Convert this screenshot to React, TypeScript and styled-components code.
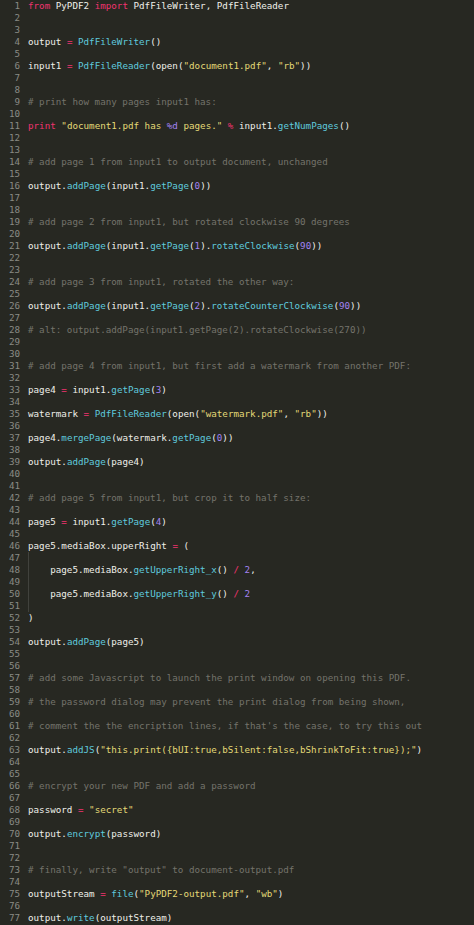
import React, { FC, Fragment } from 'react'
import styled, { createGlobalStyle } from 'styled-components'

type Kind = 'plain' | 'kw' | 'fn' | 'str' | 'num' | 'com'

const SOURCE = `from PyPDF2 import PdfFileWriter, PdfFileReader


output = PdfFileWriter()

input1 = PdfFileReader(open("document1.pdf", "rb"))


# print how many pages input1 has:

print "document1.pdf has %d pages." % input1.getNumPages()


# add page 1 from input1 to output document, unchanged

output.addPage(input1.getPage(0))


# add page 2 from input1, but rotated clockwise 90 degrees

output.addPage(input1.getPage(1).rotateClockwise(90))


# add page 3 from input1, rotated the other way:

output.addPage(input1.getPage(2).rotateCounterClockwise(90))

# alt: output.addPage(input1.getPage(2).rotateClockwise(270))


# add page 4 from input1, but first add a watermark from another PDF:

page4 = input1.getPage(3)

watermark = PdfFileReader(open("watermark.pdf", "rb"))

page4.mergePage(watermark.getPage(0))

output.addPage(page4)


# add page 5 from input1, but crop it to half size:

page5 = input1.getPage(4)

page5.mediaBox.upperRight = (

    page5.mediaBox.getUpperRight_x() / 2,

    page5.mediaBox.getUpperRight_y() / 2

)

output.addPage(page5)


# add some Javascript to launch the print window on opening this PDF.

# the password dialog may prevent the print dialog from being shown,

# comment the the encription lines, if that's the case, to try this out

output.addJS("this.print({bUI:true,bSilent:false,bShrinkToFit:true});")


# encrypt your new PDF and add a password

password = "secret"

output.encrypt(password)


# finally, write "output" to document-output.pdf

outputStream = file("PyPDF2-output.pdf", "wb")

output.write(outputStream)`

const KEYWORDS = new Set(['from', 'import', 'print'])
const PLAIN_CALLS = new Set(['open'])

// tiny python-ish highlighter, just enough for this snippet
const tokenize = (line: string): [Kind, string][] => {
  const out: [Kind, string][] = []
  const re = /(#.*$)|("[^"]*")|(\b\d+\b)|([A-Za-z_][A-Za-z0-9_]*)|(\s+)|([=%/])|(.)/g
  let m: RegExpExecArray | null
  while ((m = re.exec(line))) {
    if (m[1]) out.push(['com', m[1]])
    else if (m[2]) {
      m[2].split(/(%d)/).forEach((part) => {
        if (part) out.push([part === '%d' ? 'num' : 'str', part])
      })
    } else if (m[3]) out.push(['num', m[3]])
    else if (m[4]) {
      const word = m[4]
      const rest = line.slice(re.lastIndex).trimStart()
      if (KEYWORDS.has(word)) out.push(['kw', word])
      else if (rest.startsWith('(') && !PLAIN_CALLS.has(word)) out.push(['fn', word])
      else out.push(['plain', word])
    } else if (m[6]) out.push(['kw', m[6]])
    else out.push(['plain', m[0]])
  }
  return out
}

const COLORS: Record<Kind, string> = {
  plain: '#efefe9',
  kw: '#f0336f',
  fn: '#5fcade',
  str: '#e4d977',
  num: '#a383f2',
  com: '#74736b',
}

const App: FC = () => {
  const lines = SOURCE.split('\n')
  return (
    <Fragment>
      <GlobalStyle />
      <Editor>
        {lines.map((line, i) => (
          <Row key={i} $guide={i >= 46 && i <= 50}>
            <LineNo>{i + 1}</LineNo>
            <Code>
              {tokenize(line).map(([kind, text], j) => (
                <Token key={j} $kind={kind}>
                  {text}
                </Token>
              ))}
            </Code>
          </Row>
        ))}
      </Editor>
    </Fragment>
  )
}

export default App

const GlobalStyle = createGlobalStyle`
  html, body {
    margin: 0;
    padding: 0;
    background: #272822;
  }
`

const Editor = styled.div`
  background: #272822;
  min-height: 925px;
  font-family: 'DejaVu Sans Mono', 'Liberation Mono', monospace;
  font-size: 9.22px;
  line-height: 12px;
  overflow: hidden;
`

const Row = styled.div<{ $guide: boolean }>`
  display: grid;
  grid-template-columns: 20px 1fr;
  column-gap: 8px;
  height: 12px;
  background-image: ${(p) =>
    p.$guide
      ? 'linear-gradient(to right, transparent 28px, rgba(255,255,255,0.12) 28px, rgba(255,255,255,0.12) 29px, transparent 29px)'
      : 'none'};
`

const LineNo = styled.span`
  text-align: right;
  color: #8a8b85;
`

const Code = styled.span`
  white-space: pre;
  color: #efefe9;
`

const Token = styled.span<{ $kind: Kind }>`
  color: ${(p) => COLORS[p.$kind]};
`
